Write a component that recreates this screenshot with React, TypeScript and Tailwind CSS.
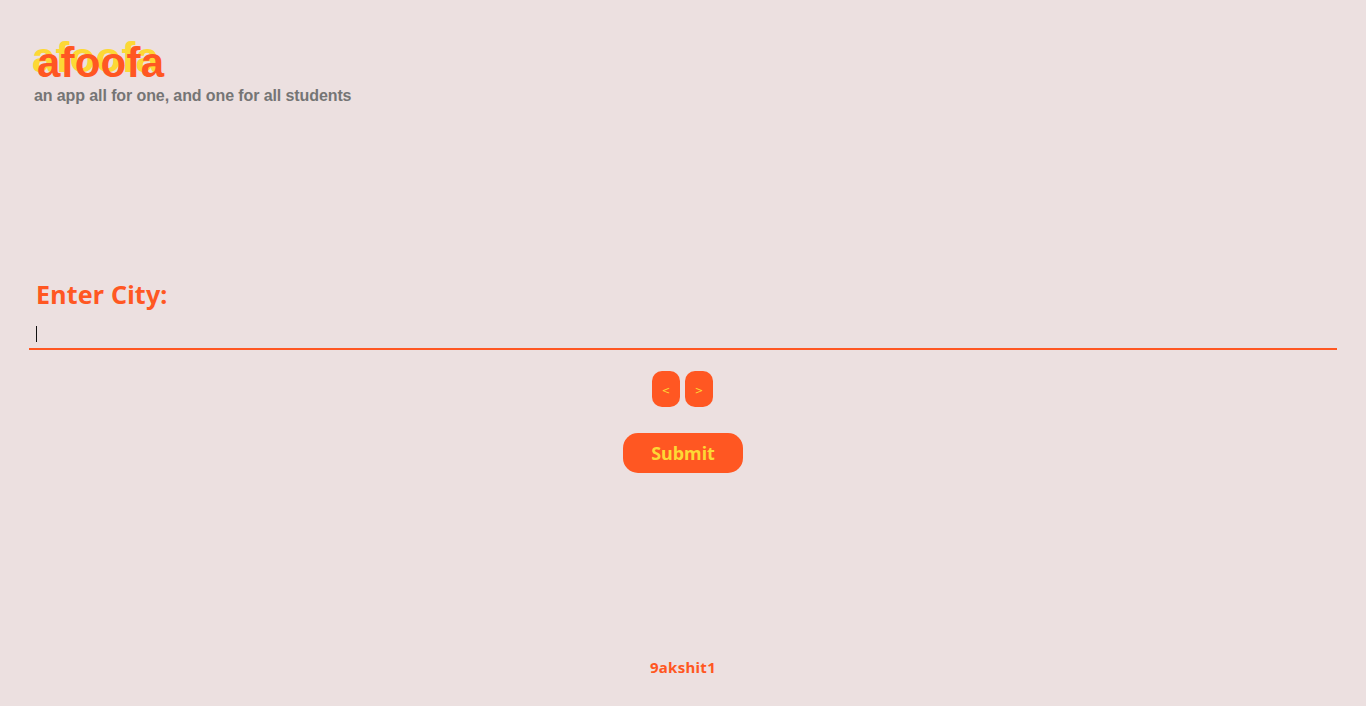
export default function App() {
  const tahoma = "font-['Noto_Sans',sans-serif] font-bold";
  return (
    <div className="min-h-[706px] h-[706px] bg-[#ece0e0] flex flex-col px-[29px] overflow-hidden">
      <header className="pt-[37px] pl-[5px] h-[279px] font-['Liberation_Sans',sans-serif] font-bold">
        <h1 className="text-[42px] leading-[52px] pl-[3px] tracking-[0.2px] text-[#ff5722] [text-shadow:-5px_-5px_0_#fdd835]">afoofa</h1>
        <p className="text-[16px] leading-[20px] tracking-[-0.1px] text-[#757575] -mt-[3px]">an app all for one, and one for all students</p>
      </header>
      <label className={`${tahoma} text-[25px] leading-[30px] tracking-[0.2px] pl-[7px] text-[#ff5722]`}>Enter City:</label>
      <div className="mt-[11px] h-[30px] border-b-2 border-[#ff5722] flex items-center pl-[7px]">
        <span className="w-px h-[16px] bg-[#111111]"></span>
      </div>
      <div className="mt-[21px] flex justify-center gap-[5px] pr-px">
        <button className="w-[28px] h-[36px] rounded-[10px] bg-[#ff5722] text-[#fdd835] text-[10px] pt-[3px] font-['DejaVu_Sans',sans-serif]">&lt;</button>
        <button className="w-[28px] h-[36px] rounded-[10px] bg-[#ff5722] text-[#fdd835] text-[10px] pt-[3px] font-['DejaVu_Sans',sans-serif]">&gt;</button>
      </div>
      <div className="mt-[26px] flex justify-center">
        <button className={`${tahoma} w-[120px] h-[40px] rounded-[15px] bg-[#ff5722] text-[#fdd835] text-[18px]`}>Submit</button>
      </div>
      <footer className={`${tahoma} mt-[184px] text-center text-[15px] leading-[20px] tracking-[0.3px] text-[#ff5722]`}>9akshit1</footer>
    </div>
  );
}
